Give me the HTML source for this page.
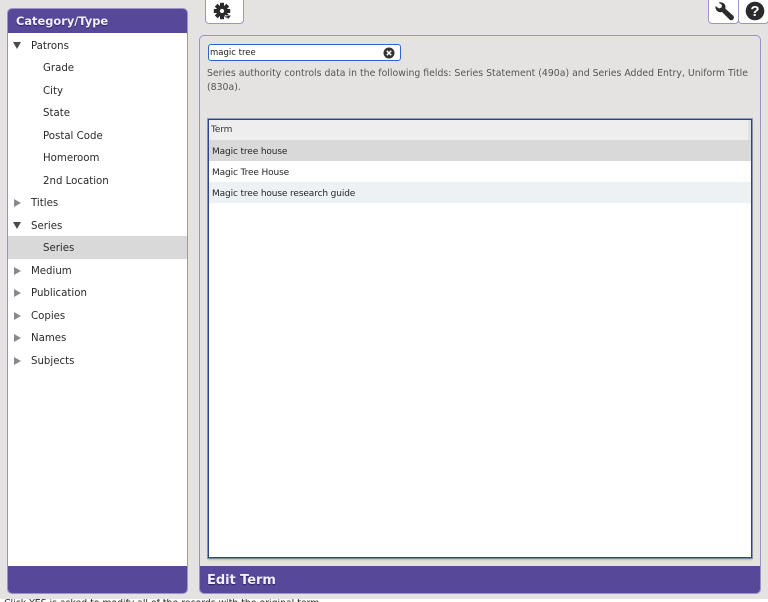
<!DOCTYPE html>
<html>
<head>
<meta charset="utf-8">
<style>
html,body{margin:0;padding:0}
body{width:768px;height:602px;overflow:hidden;position:relative;background:#e4e3e1;font-family:"DejaVu Sans","Liberation Sans",sans-serif;color:#333}
.a{position:absolute;box-sizing:border-box}
.t{position:absolute;white-space:nowrap;font-size:10.2px;line-height:14px;color:#2a2a2a}
.r{font-size:9px;letter-spacing:-.13px;color:#262626}
.tri{position:absolute;width:0;height:0}
.down{border-left:4px solid transparent;border-right:4px solid transparent;border-top:7px solid #4a4a4a;left:13px}
.right{border-top:4px solid transparent;border-bottom:4px solid transparent;border-left:7px solid #8a8a8a;left:14px}
.btn{background:#fff;border:1px solid #9d92c8;border-top:none;border-radius:0 0 4px 4px}
</style>
</head>
<body>
<!-- left panel -->
<div class="a" style="left:7px;top:8px;width:181px;height:586px;background:#fff;border:1px solid #9d92c8;border-radius:5px;overflow:hidden">
  <div class="a" style="left:0;top:0;width:179px;height:24px;background:#584899"></div>
  <div class="a" style="left:0;top:557px;width:179px;height:27px;background:#584899"></div>
  <div class="a" style="left:0;top:227px;width:179px;height:23px;background:#d9d9d9"></div>
</div>
<div class="t" style="left:16px;top:13px;font-size:11.4px;font-weight:bold;color:#f2f0f8;line-height:16px;text-shadow:0 1px 1px #2c2060">Category/Type</div>

<div class="tri down" style="top:42px"></div><div class="t" style="left:31px;top:40px">Patrons</div>
<div class="t" style="left:43px;top:62px">Grade</div>
<div class="t" style="left:43px;top:85px">City</div>
<div class="t" style="left:43px;top:107px">State</div>
<div class="t" style="left:43px;top:130px">Postal Code</div>
<div class="t" style="left:43px;top:152px">Homeroom</div>
<div class="t" style="left:43px;top:175px">2nd Location</div>
<div class="tri right" style="top:199px"></div><div class="t" style="left:31px;top:197px">Titles</div>
<div class="tri down" style="top:222px"></div><div class="t" style="left:31px;top:220px">Series</div>
<div class="t" style="left:43px;top:242px">Series</div>
<div class="tri right" style="top:267px"></div><div class="t" style="left:31px;top:265px">Medium</div>
<div class="tri right" style="top:289px"></div><div class="t" style="left:31px;top:287px">Publication</div>
<div class="tri right" style="top:312px"></div><div class="t" style="left:31px;top:310px">Copies</div>
<div class="tri right" style="top:334px"></div><div class="t" style="left:31px;top:332px">Names</div>
<div class="tri right" style="top:357px"></div><div class="t" style="left:31px;top:355px">Subjects</div>

<!-- top buttons -->
<div class="a btn" style="left:205px;top:0;width:39px;height:24px">
  <svg width="37" height="23" style="position:absolute;left:0;top:0" viewBox="0 0 37 23">
    <g fill="#2b2b2b" transform="translate(16,11)">
      <circle r="5.6"/>
      <g><rect x="-2" y="-8.2" width="4" height="4"/><rect x="-2" y="4.2" width="4" height="4"/><rect x="-8.2" y="-2" width="4" height="4"/><rect x="4.2" y="-2" width="4" height="4"/></g>
      <g transform="rotate(45)"><rect x="-2" y="-8.2" width="4" height="4"/><rect x="-2" y="4.2" width="4" height="4"/><rect x="-8.2" y="-2" width="4" height="4"/><rect x="4.2" y="-2" width="4" height="4"/></g>
      <circle r="2.1" fill="#fff"/>
    </g>
    <path d="M19.500 15.500h5.500l-2.750 3.500z" fill="#333" stroke="#fff" stroke-width="1" paint-order="stroke"/>
  </svg>
</div>
<div class="a btn" style="left:708px;top:0;width:31px;height:24px">
  <svg width="29" height="23" style="position:absolute;left:0;top:0" viewBox="0 0 29 23">
    <path d="M6.500 6 10 8.500 12.500 7.500 13 5 9.500 2.500C13 1.500 16.500 3.500 16.500 7L16.200 8.500 24 15.500C25.500 17 25 18.500 24 19.500 23 20.500 21.500 20.500 20.500 19.500L13 12C9.500 13 6 10.500 6.500 6Z" fill="#2b2b2b"/>
  </svg>
</div>
<div class="a btn" style="left:738px;top:0;width:31px;height:24px">
  <svg width="30" height="23" style="position:absolute;left:0;top:0" viewBox="0 0 30 23">
    <circle cx="16" cy="11" r="9.300" fill="#2b2b2b"/>
    <text x="16" y="16" text-anchor="middle" font-family="Liberation Sans, sans-serif" font-weight="bold" font-size="15" fill="#fff">?</text>
  </svg>
</div>

<!-- right panel -->
<div class="a" style="left:199px;top:35px;width:562px;height:559px;border:1px solid #9d92c8;border-radius:5px;overflow:hidden;background:#e4e3e1">
  <div class="a" style="left:0;top:530px;width:560px;height:27px;background:#584899"></div>
</div>
<div class="t" style="left:207px;top:573px;font-size:13px;font-weight:bold;color:#f2f0f8;line-height:16px;letter-spacing:-.05px;text-shadow:0 1px 1px #2c2060">Edit Term</div>

<!-- search -->
<div class="a" style="left:208px;top:44px;width:193px;height:17px;background:#fff;border:1.5px solid #2f62d4;border-radius:3px"></div>
<div class="t" style="left:210px;top:46.500px;font-size:8.5px;line-height:13px;color:#222">magic tree</div>
<svg class="a" style="left:383px;top:47px" width="12" height="12" viewBox="0 0 12 12">
  <circle cx="6" cy="6" r="5.500" fill="#333"/>
  <path d="M3.800 3.800 8.200 8.200M8.200 3.800 3.800 8.200" stroke="#fff" stroke-width="1.500"/>
</svg>
<div class="t" style="left:207px;top:67px;font-size:9.35px;line-height:14px;color:#555">Series authority controls data in the following fields: Series Statement (490a) and Series Added Entry, Uniform Title<br>(830a).</div>

<!-- table -->
<div class="a" style="left:208px;top:119px;width:544px;height:439px;background:#fff;border:1px solid #2b4585;box-shadow:0 0 0 1px rgba(43,69,133,.45),0 2px 2px rgba(0,0,0,.2)">
  <div class="a" style="left:0;top:0;width:542px;height:20px;background:#eeeeee;border-right:3px solid #e2e2e2"></div>
  <div class="a" style="left:0;top:20px;width:542px;height:21px;background:#d9d9d9"></div>
  <div class="a" style="left:0;top:62px;width:542px;height:21px;background:#edf1f4"></div>
</div>
<div class="t r" style="left:211px;top:122.500px;color:#333">Term</div>
<div class="t r" style="left:212px;top:145px">Magic tree house</div>
<div class="t r" style="left:212px;top:166px">Magic Tree House</div>
<div class="t r" style="left:212px;top:187px">Magic tree house research guide</div>

<!-- clipped text at the very bottom -->
<div class="a" style="left:0;top:599px;width:768px;height:3px;overflow:hidden;background:#fff">
  <div class="t" style="left:4px;top:-1px;font-size:9.3px;line-height:12px;color:#222">Click YES is asked to modify all of the records with the original term.</div>
</div>
</body>
</html>
